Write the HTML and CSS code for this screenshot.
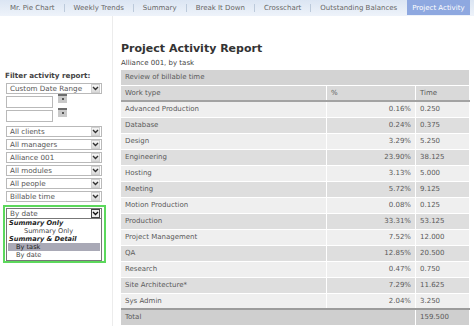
FILE: index.html
```html
<!DOCTYPE html>
<html lang="en">

<head>
  <meta charset="UTF-8">
  <title>Project Activity Report</title>
  <link rel="stylesheet" href="styles.css">
</head>

<body>

  <ul class="tabs">
    <li>Mr. Pie Chart</li>
    <li>Weekly Trends</li>
    <li>Summary</li>
    <li>Break It Down</li>
    <li>Crosschart</li>
    <li>Outstanding Balances</li>
    <li class="active">Project Activity</li>
  </ul>

  <div class="layout">
    <div class="sidebar">
      <div class="filter-title">Filter activity report:</div>

      <div class="select"><span class="label">Custom Date Range</span><span class="arrow"><svg width="7" height="5" viewBox="0 0 7 5"><path d="M1 1l2.5 2.5L6 1" stroke="#333" stroke-width="1.4" fill="none"/></svg></span></div>

      <div class="date-row">
        <div class="input"></div>
        <svg class="cal" width="9" height="9" viewBox="0 0 9 9"><rect x="0" y="0" width="9" height="9" fill="#c9c9c9"/><rect x="0" y="0" width="9" height="2" fill="#6d6d6d"/><rect x="4" y="4" width="2" height="2" fill="#555"/></svg>
      </div>
      <div class="date-row last">
        <div class="input"></div>
        <svg class="cal" width="9" height="9" viewBox="0 0 9 9"><rect x="0" y="0" width="9" height="9" fill="#c9c9c9"/><rect x="0" y="0" width="9" height="2" fill="#6d6d6d"/><rect x="4" y="4" width="2" height="2" fill="#555"/></svg>
      </div>

      <div class="select"><span class="label">All clients</span><span class="arrow"><svg width="7" height="5" viewBox="0 0 7 5"><path d="M1 1l2.5 2.5L6 1" stroke="#333" stroke-width="1.4" fill="none"/></svg></span></div>
      <div class="select"><span class="label">All managers</span><span class="arrow"><svg width="7" height="5" viewBox="0 0 7 5"><path d="M1 1l2.5 2.5L6 1" stroke="#333" stroke-width="1.4" fill="none"/></svg></span></div>
      <div class="select"><span class="label">Alliance 001</span><span class="arrow"><svg width="7" height="5" viewBox="0 0 7 5"><path d="M1 1l2.5 2.5L6 1" stroke="#333" stroke-width="1.4" fill="none"/></svg></span></div>
      <div class="select"><span class="label">All modules</span><span class="arrow"><svg width="7" height="5" viewBox="0 0 7 5"><path d="M1 1l2.5 2.5L6 1" stroke="#333" stroke-width="1.4" fill="none"/></svg></span></div>
      <div class="select"><span class="label">All people</span><span class="arrow"><svg width="7" height="5" viewBox="0 0 7 5"><path d="M1 1l2.5 2.5L6 1" stroke="#333" stroke-width="1.4" fill="none"/></svg></span></div>
      <div class="select"><span class="label">Billable time</span><span class="arrow"><svg width="7" height="5" viewBox="0 0 7 5"><path d="M1 1l2.5 2.5L6 1" stroke="#333" stroke-width="1.4" fill="none"/></svg></span></div>

      <div class="highlight">
        <div class="select open"><span class="label">By date</span><span class="arrow dark"><svg width="7" height="5" viewBox="0 0 7 5"><path d="M1 1l2.5 2.5L6 1" stroke="#111" stroke-width="1.4" fill="none"/></svg></span></div>
        <ul class="options">
          <li class="group">Summary Only</li>
          <li class="opt indent">Summary Only</li>
          <li class="group">Summary &amp; Detail</li>
          <li class="opt selected">By task</li>
          <li class="opt">By date</li>
        </ul>
      </div>
    </div>

    <div class="main">
      <h1>Project Activity Report</h1>
      <div class="subtitle">Alliance 001, by task</div>

      <table class="report">
        <colgroup>
          <col class="c-type">
          <col class="c-pct">
          <col class="c-time">
        </colgroup>
        <thead>
          <tr class="caption"><th colspan="3">Review of billable time</th></tr>
          <tr class="cols"><th>Work type</th><th>%</th><th>Time</th></tr>
        </thead>
        <tbody>
          <tr><td>Advanced Production</td><td class="num">0.16%</td><td>0.250</td></tr>
          <tr><td>Database</td><td class="num">0.24%</td><td>0.375</td></tr>
          <tr><td>Design</td><td class="num">3.29%</td><td>5.250</td></tr>
          <tr><td>Engineering</td><td class="num">23.90%</td><td>38.125</td></tr>
          <tr><td>Hosting</td><td class="num">3.13%</td><td>5.000</td></tr>
          <tr><td>Meeting</td><td class="num">5.72%</td><td>9.125</td></tr>
          <tr><td>Motion Production</td><td class="num">0.08%</td><td>0.125</td></tr>
          <tr><td>Production</td><td class="num">33.31%</td><td>53.125</td></tr>
          <tr><td>Project Management</td><td class="num">7.52%</td><td>12.000</td></tr>
          <tr><td>QA</td><td class="num">12.85%</td><td>20.500</td></tr>
          <tr><td>Research</td><td class="num">0.47%</td><td>0.750</td></tr>
          <tr><td>Site Architecture*</td><td class="num">7.29%</td><td>11.625</td></tr>
          <tr><td>Sys Admin</td><td class="num">2.04%</td><td>3.250</td></tr>
        </tbody>
        <tfoot>
          <tr><td colspan="2">Total</td><td>159.500</td></tr>
        </tfoot>
      </table>
    </div>
  </div>

</body>

</html>
```

FILE: styles.css
```css
* {
  box-sizing: border-box;
  margin: 0;
  padding: 0;
}

body {
  font-family: 'DejaVu Sans', Verdana, sans-serif;
  background-color: #fff;
  color: #555;
  width: 474px;
  height: 326px;
  overflow: hidden;
}

/* Onglets du haut */
.tabs {
  display: flex;
  list-style: none;
  height: 16px;
  padding-left: 5px;
  background: linear-gradient(#dbe5f3, #eef3fa);
  font-size: 7px;
  color: #666;
}

.tabs li {
  display: flex;
  align-items: center;
  padding: 0 5px;
  white-space: nowrap;
}

.tabs li + li::before {
  content: '';
  width: 1px;
  height: 8px;
  background-color: #bccadb;
  margin: 0 9px 0 -1px;
}

.tabs li.active {
  background-color: #8ea8e0;
  color: #fff;
  margin-left: 5px;
  padding: 0 5px;
  height: 15px;
}

.tabs li.active::before {
  display: none;
}

.layout {
  display: flex;
}

/* Colonne des filtres */
.sidebar {
  width: 113px;
  flex-shrink: 0;
  padding: 56px 0 0 6px;
  border-right: 1px solid #ececec;
  height: 310px;
}

.filter-title {
  font-size: 7.2px;
  font-weight: bold;
  color: #444;
  line-height: 8px;
  margin: 0 0 3px -1px;
}

.select {
  display: flex;
  align-items: center;
  width: 96px;
  height: 11px;
  border: 1px solid #b9b9b9;
  padding-left: 3px;
  margin-bottom: 2px;
  font-size: 7.2px;
  color: #555;
  background-color: #fff;
}

.select .label {
  flex: 1;
  white-space: nowrap;
}

.arrow {
  display: flex;
  justify-content: center;
  align-items: center;
  width: 9px;
  height: 9px;
  margin-right: 1px;
  background: linear-gradient(#f6f6f6, #dadada);
  border: 1px solid #d0d0d0;
}

.arrow.dark {
  border-color: #444;
  background: #eee;
}

.date-row {
  display: flex;
  align-items: flex-start;
  margin-bottom: 2px;
}

.date-row.last {
  margin-bottom: 4px;
}

.input {
  width: 47px;
  height: 12px;
  border: 1px solid #b9b9b9;
}

.cal {
  margin: -2px 0 0 5px;
}

.highlight {
  width: 103px;
  margin: 3px 0 0 -3px;
  padding: 1px 0 0 1px;
  border: 2px solid #5cd85c;
}

.highlight .select {
  margin-bottom: 0;
  border-color: #777;
}

.options {
  list-style: none;
  width: 96px;
  border: 1px solid #777;
  border-top: none;
  padding: 0 1px 1px;
  font-size: 6.6px;
  line-height: 8px;
  color: #444;
}

.options .group {
  font-weight: bold;
  font-style: italic;
  color: #222;
  padding-left: 1px;
}

.options .opt {
  padding-left: 8px;
}

.options .indent {
  padding-left: 16px;
}

.options .selected {
  background-color: #a9a9b6;
  color: #222;
}

/* Rapport */
.main {
  flex: 1;
  padding: 26px 4px 0 8px;
}

.main h1 {
  font-size: 11px;
  font-weight: bold;
  color: #333;
  line-height: 14px;
}

.subtitle {
  font-size: 7px;
  line-height: 9px;
  margin-top: 3px;
  color: #444;
}

.report {
  width: 100%;
  margin-top: 2px;
  border-collapse: collapse;
  font-size: 7px;
  color: #5a5a5a;
}

.c-pct {
  width: 89px;
}

.c-time {
  width: 54px;
}

.report th,
.report td {
  height: 16px;
  padding: 0 4px;
  text-align: left;
  font-weight: normal;
  border-right: 1px solid #fff;
  border-bottom: 1px solid #fff;
  white-space: nowrap;
}

.report td.num {
  text-align: right;
}

.report .caption th {
  height: 15px;
  background-color: #d3d3d3;
}

.report .cols th {
  background-color: #d9d9d9;
  border-bottom: 2px solid #a3a3a3;
}

.report tbody tr:nth-child(odd) td {
  background-color: #efefef;
}

.report tbody tr:nth-child(even) td {
  background-color: #dedede;
}

.report tbody tr:last-child td {
  border-bottom: 2px solid #9c9c9c;
}

.report tfoot td {
  background-color: #cfcfcf;
}
```
